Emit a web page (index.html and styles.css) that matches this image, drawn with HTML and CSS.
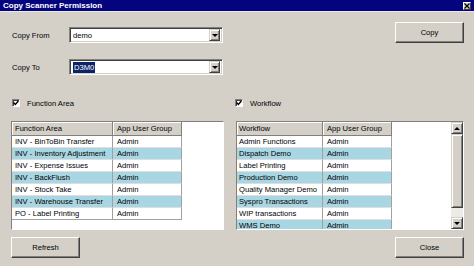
FILE: index.html
```html
<!DOCTYPE html>
<html>
<head>
<meta charset="utf-8">
<link rel="stylesheet" href="styles.css">
</head>
<body>
<div class="window">
  <div class="titlebar">
    <span class="title">Copy Scanner Permission</span>
    <span class="close"><svg width="6" height="6" viewBox="0 0 6 6"><path d="M0.5 0.5 L5.5 5.5 M5.5 0.5 L0.5 5.5" stroke="#000" stroke-width="1.2"/></svg></span>
  </div>
  <div class="body">
    <div class="top">
      <div class="fields">
        <div class="field">
          <span class="label">Copy From</span>
          <div class="combo"><span class="value">demo</span><span class="drop"><span class="tri"></span></span></div>
        </div>
        <div class="field">
          <span class="label">Copy To</span>
          <div class="combo"><span class="value"><span class="sel">D3M0</span></span><span class="drop"><span class="tri"></span></span></div>
        </div>
      </div>
      <button class="btn">Copy</button>
    </div>

    <div class="checks">
      <div class="check first"><span class="box"><svg width="6" height="6" viewBox="0 0 6 6"><path d="M0.6 2.6 L2.3 4.4 L5.4 1" stroke="#000" stroke-width="1.4" fill="none"/></svg></span><span>Function Area</span></div>
      <div class="check second"><span class="box"><svg width="6" height="6" viewBox="0 0 6 6"><path d="M0.6 2.6 L2.3 4.4 L5.4 1" stroke="#000" stroke-width="1.4" fill="none"/></svg></span><span>Workflow</span></div>
    </div>

    <div class="grids">
      <div class="grid gleft">
        <div class="gbody">
          <div class="row head"><div class="c c1">Function Area</div><div class="c c2">App User Group</div></div>
          <div class="row"><div class="c c1">INV - BinToBin Transfer</div><div class="c c2">Admin</div></div>
          <div class="row alt"><div class="c c1">INV - Inventory Adjustment</div><div class="c c2">Admin</div></div>
          <div class="row"><div class="c c1">INV - Expense Issues</div><div class="c c2">Admin</div></div>
          <div class="row alt"><div class="c c1">INV - BackFlush</div><div class="c c2">Admin</div></div>
          <div class="row"><div class="c c1">INV - Stock Take</div><div class="c c2">Admin</div></div>
          <div class="row alt"><div class="c c1">INV - Warehouse Transfer</div><div class="c c2">Admin</div></div>
          <div class="row"><div class="c c1">PO - Label Printing</div><div class="c c2">Admin</div></div>
        </div>
      </div>
      <div class="grid gright">
        <div class="gbody">
          <div class="row head"><div class="c c1">Workflow</div><div class="c c2">App User Group</div></div>
          <div class="row"><div class="c c1">Admin Functions</div><div class="c c2">Admin</div></div>
          <div class="row alt"><div class="c c1">Dispatch Demo</div><div class="c c2">Admin</div></div>
          <div class="row"><div class="c c1">Label Printing</div><div class="c c2">Admin</div></div>
          <div class="row alt"><div class="c c1">Production Demo</div><div class="c c2">Admin</div></div>
          <div class="row"><div class="c c1">Quality Manager Demo</div><div class="c c2">Admin</div></div>
          <div class="row alt"><div class="c c1">Syspro Transactions</div><div class="c c2">Admin</div></div>
          <div class="row"><div class="c c1">WIP transactions</div><div class="c c2">Admin</div></div>
          <div class="row alt"><div class="c c1">WMS Demo</div><div class="c c2">Admin</div></div>
        </div>
        <div class="scrollbar">
          <div class="sbtn"><span class="tri up"></span></div>
          <div class="thumb"></div>
          <div class="track"></div>
          <div class="sbtn"><span class="tri"></span></div>
        </div>
      </div>
    </div>

    <div class="bottom">
      <button class="btn">Refresh</button>
      <button class="btn">Close</button>
    </div>
  </div>
</div>
</body>
</html>
```

FILE: styles.css
```css
* { box-sizing: border-box; }

body {
  margin: 0;
  background: #d4d0c8;
  font-family: "Liberation Sans", Arial, sans-serif;
  font-size: 7.6px;
  color: #000;
}

.window {
  width: 474px;
  height: 266px;
  overflow: hidden;
  background: #d4d0c8;
}

.titlebar {
  height: 12px;
  background: #04047e;
  border-bottom: 1px solid #ecebe7;
  display: flex;
  align-items: center;
  justify-content: space-between;
  padding: 0 3px;
}

.title {
  color: #fff;
  font-weight: bold;
  font-size: 8px;
  line-height: 11px;
}

.close {
  width: 8px;
  height: 8px;
  background: #d4d0c8;
  border: 1px solid;
  border-color: #fff #404040 #404040 #fff;
  display: flex;
  align-items: center;
  justify-content: center;
}

.body {
  padding: 10px 10px 0 11px;
}

.top {
  display: flex;
  justify-content: space-between;
  align-items: flex-start;
  height: 53px;
}

.fields {
  padding-top: 5px;
  display: flex;
  flex-direction: column;
  gap: 16px;
}

.field {
  display: flex;
  align-items: center;
  height: 16px;
}

.label {
  width: 58px;
  padding-left: 1px;
}

.combo {
  width: 154px;
  height: 16px;
  background: #fff;
  border: 1px solid;
  border-color: #808080 #fff #fff #808080;
  box-shadow: inset 1px 1px #404040, inset -1px -1px #d4d0c8;
  display: flex;
  align-items: center;
  padding: 2px;
}

.value {
  flex: 1;
  padding-left: 1px;
  line-height: 11px;
}

.sel {
  background: #0a246a;
  color: #fff;
  padding: 1px 1px;
}

.drop {
  width: 11px;
  height: 12px;
  background: #d4d0c8;
  border: 1px solid;
  border-color: #d4d0c8 #404040 #404040 #d4d0c8;
  box-shadow: inset 1px 1px #fff, inset -1px -1px #808080;
  display: flex;
  align-items: center;
  justify-content: center;
}

.tri {
  width: 0;
  height: 0;
  border-left: 3px solid transparent;
  border-right: 3px solid transparent;
  border-top: 3px solid #000;
}

.tri.up {
  border-top: 0;
  border-bottom: 3px solid #000;
}

.btn {
  font: inherit;
  color: #000;
  width: 69px;
  height: 21px;
  padding: 0;
  background: #d4d0c8;
  border: 1px solid;
  border-color: #fff #404040 #404040 #fff;
  box-shadow: inset -1px -1px #808080;
}

.checks {
  margin-top: 24px;
  display: grid;
  grid-template-columns: 213px 228px;
  column-gap: 12px;
  height: 8px;
}

.check {
  display: flex;
  align-items: center;
  gap: 7px;
  height: 8px;
}

.check.first { padding-left: 1px; }
.check.second { margin-left: -1px; }

.box {
  width: 8px;
  height: 8px;
  background: #fff;
  border: 1px solid;
  border-color: #808080 #fff #fff #808080;
  box-shadow: inset 1px 1px #404040;
  display: flex;
  align-items: center;
  justify-content: center;
}

.grids {
  margin-top: 14px;
  display: grid;
  grid-template-columns: 213px 228px;
  column-gap: 12px;
  height: 109px;
}

.grid {
  background: #fff;
  border: 1px solid;
  border-color: #808080 #fff #fff #808080;
  overflow: hidden;
  display: flex;
}

.gbody {
  flex: 1;
  overflow: hidden;
}

.row {
  display: flex;
  height: 12px;
}

.c {
  height: 12px;
  line-height: 11px;
  white-space: nowrap;
  overflow: hidden;
  border-right: 1px solid #a0a0a0;
  border-bottom: 1px solid #dedede;
}

.row.alt .c { background: #a9d6e3; }

.gleft .c1 { width: 101px; padding-left: 3px; }
.gright .c1 { width: 86px; padding-left: 2px; }
.c2 { width: 69px; padding-left: 4px; }

.row.head {
  height: 14px;
}

.row.head .c {
  height: 14px;
  line-height: 13px;
  background: #d4d0c8;
  border-right: 1px solid #808080;
  border-bottom: 1px solid #808080;
  box-shadow: inset 1px 1px #fff;
}

.row:last-child .c { border-bottom-color: #a0a0a0; }

.scrollbar {
  width: 12px;
  display: flex;
  flex-direction: column;
  background: #ecebe8;
}

.sbtn {
  height: 12px;
  background: #d4d0c8;
  border: 1px solid;
  border-color: #d4d0c8 #404040 #404040 #d4d0c8;
  box-shadow: inset 1px 1px #fff, inset -1px -1px #808080;
  display: flex;
  align-items: center;
  justify-content: center;
}

.thumb {
  height: 74px;
  background: #d4d0c8;
  border: 1px solid;
  border-color: #d4d0c8 #404040 #404040 #d4d0c8;
  box-shadow: inset 1px 1px #fff, inset -1px -1px #808080;
}

.track {
  flex: 1;
}

.bottom {
  margin-top: 7px;
  display: flex;
  justify-content: space-between;
}
```
